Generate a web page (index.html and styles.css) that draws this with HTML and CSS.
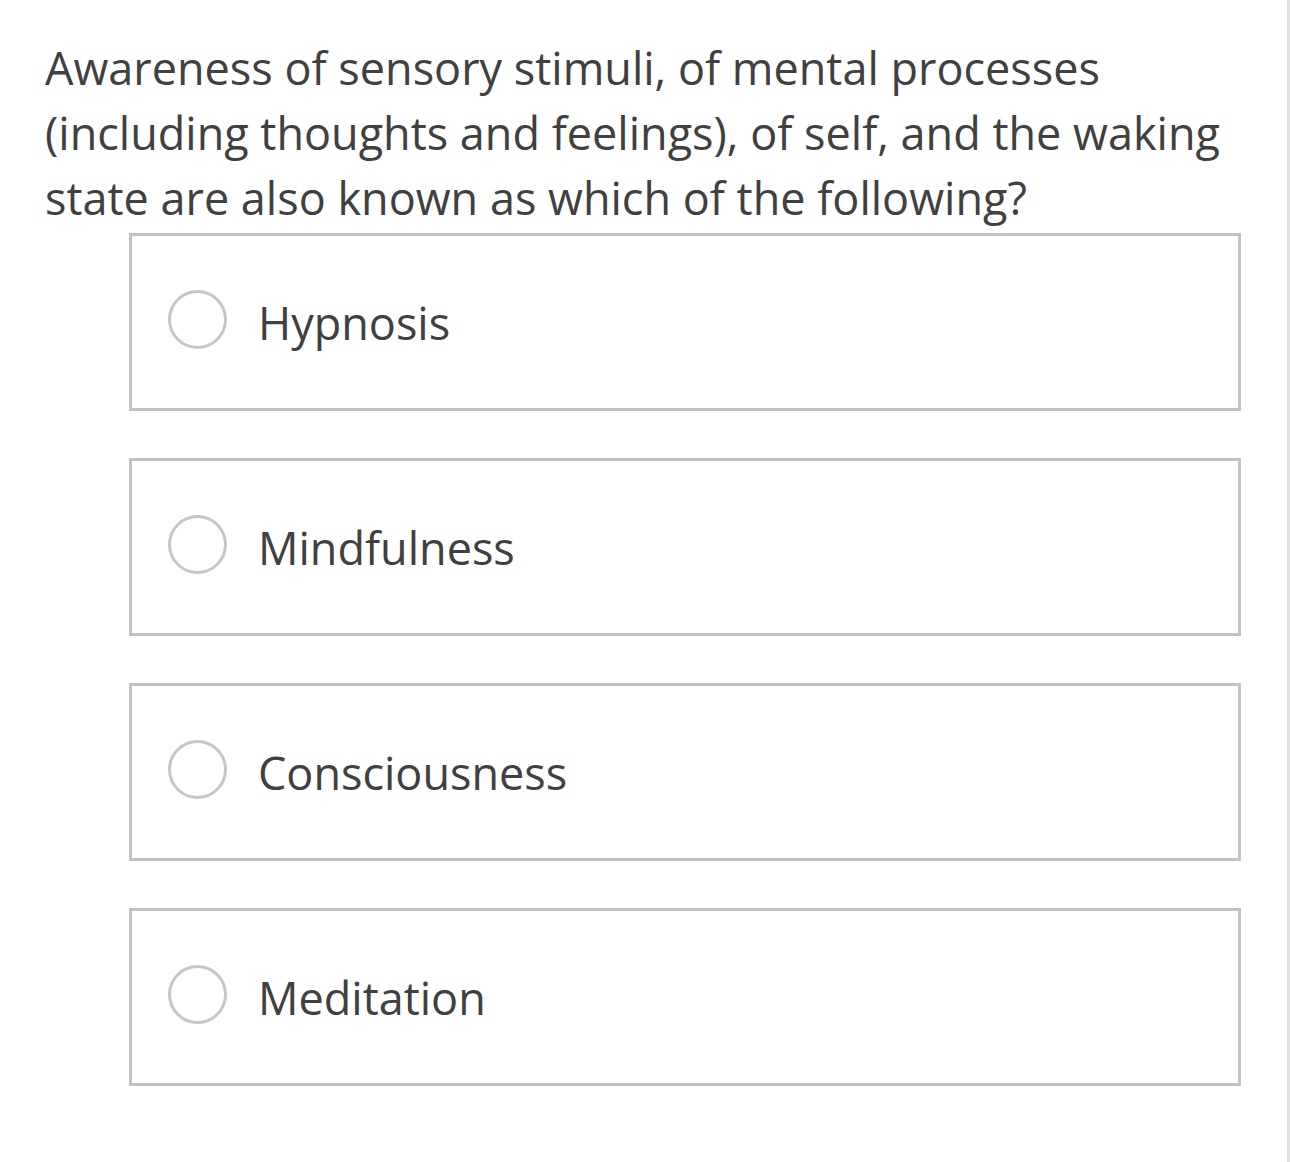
FILE: index.html
```html
<!DOCTYPE html>
<html lang="en">
<head>
  <meta charset="UTF-8" />
  <meta name="viewport" content="width=device-width, initial-scale=1.0"/>
  <title>Question</title>
  <link rel="stylesheet" href="styles.css">
</head>
<body>
  <div class="page">
    <p class="question">Awareness of sensory stimuli, of mental processes (including thoughts and feelings), of self, and the waking state are also known as which of the following?</p>

    <!-- Варианты ответа -->
    <div class="options">
      <label class="option">
        <span class="radio"></span>
        <span class="option-text">Hypnosis</span>
      </label>
      <label class="option">
        <span class="radio"></span>
        <span class="option-text">Mindfulness</span>
      </label>
      <label class="option">
        <span class="radio"></span>
        <span class="option-text">Consciousness</span>
      </label>
      <label class="option">
        <span class="radio"></span>
        <span class="option-text">Meditation</span>
      </label>
    </div>
  </div>
</body>
</html>
```

FILE: styles.css
```css
:root {
  --text: #404040;
  --border: #c2c2c2;
  --radio: #c6c6c6;
  --edge: #e0e0e0;
}

html, body {
  margin: 0;
  padding: 0;
  background-color: #fff;
}

body {
  font-family: 'Open Sans', 'Noto Sans', sans-serif;
  color: var(--text);
  height: 1162px;
  overflow: hidden;
}

.page {
  width: 1290px;
  height: 1162px;
  box-sizing: border-box;
  border-right: 3px solid var(--edge);
  padding: 35px 0 0 45px;
}

.question {
  margin: 0 0 3px 0;
  font-size: 45px;
  line-height: 65px;
  width: 1200px;
}

.options {
  display: flex;
  flex-direction: column;
  gap: 47px;
  margin-left: 84px;
}

.option {
  display: flex;
  align-items: center;
  width: 1112px;
  height: 178px;
  box-sizing: border-box;
  border: 3px solid var(--border);
  padding-left: 36px;
  padding-bottom: 6px;
  cursor: pointer;
}

.radio {
  width: 59px;
  height: 59px;
  box-sizing: border-box;
  border: 3px solid var(--radio);
  border-radius: 50%;
  flex-shrink: 0;
}

.option-text {
  font-size: 45px;
  margin-left: 31px;
  padding-top: 6px;
}
```
